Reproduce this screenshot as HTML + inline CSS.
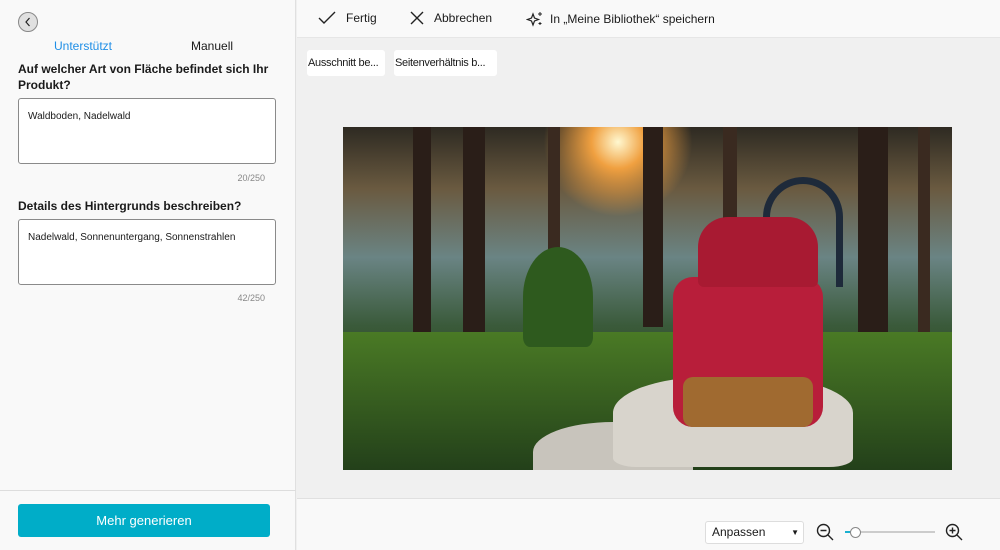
<!DOCTYPE html>
<html><head><meta charset="utf-8"><style>
*{box-sizing:border-box;margin:0;padding:0}
body{width:1000px;height:550px;overflow:hidden;font-family:"Segoe UI","Liberation Sans",sans-serif;background:#f0f0f0;position:relative;font-size:12px;color:#1a1a1a}
.abs{position:absolute}
.left{left:0;top:0;width:296px;height:550px;background:#f9f9f9;border-right:1px solid #e0e0e0}
.ta{position:absolute;left:18px;width:258px;height:66px;background:#fff;border:1px solid #8a8a8a;border-radius:3px;font-size:10px;padding:12px 9px}
.lbl{position:absolute;left:18px;font-weight:bold;font-size:12px;line-height:16px}
.cnt{position:absolute;right:30px;font-size:9px;color:#888}
.tool{position:absolute;top:11px;font-size:12px;display:flex;align-items:center;gap:10px}
.btn{position:absolute;top:50px;height:26px;background:#fff;border-radius:3px;font-size:11px;line-height:26px;padding:0 1px;white-space:nowrap;overflow:hidden;letter-spacing:-0.3px}
</style></head><body>
<div class="abs left">
  <div class="abs" style="left:18px;top:12px;width:20px;height:20px;border-radius:50%;background:#e0e0e0;border:1px solid #888"><svg width="18" height="18" style="position:absolute;left:0;top:0"><path d="M10.5 5L7 9l3.5 4" stroke="#222" fill="none" stroke-width="1.2"/></svg></div>
  <div class="abs" style="left:54px;top:39px;color:#1e8ee6;font-size:12px">Unterstützt</div>
  <div class="abs" style="left:191px;top:39px;font-size:12px">Manuell</div>
  <div class="lbl" style="top:61px">Auf welcher Art von Fläche befindet sich Ihr<br>Produkt?</div>
  <div class="ta" style="top:98px">Waldboden, Nadelwald</div>
  <div class="cnt" style="top:173px">20/250</div>
  <div class="lbl" style="top:198px">Details des Hintergrunds beschreiben?</div>
  <div class="ta" style="top:219px">Nadelwald, Sonnenuntergang, Sonnenstrahlen</div>
  <div class="cnt" style="top:293px">42/250</div>
  <div class="abs" style="left:0;top:490px;width:296px;border-top:1px solid #ddd"></div>
  <div class="abs" style="left:18px;top:504px;width:252px;height:33px;background:#00adc8;border-radius:3px;color:#fff;font-size:13px;text-align:center;line-height:33px">Mehr generieren</div>
</div>
<div class="abs" style="left:297px;top:0;width:703px;height:38px;background:#f9f9f9;border-bottom:1px solid #e6e6e6"></div>
<div class="tool" style="left:318px"><svg width="18" height="14"><path d="M1 7l5 5L17 1" stroke="#222" fill="none" stroke-width="1.4"/></svg>Fertig</div>
<div class="tool" style="left:410px"><svg width="14" height="14"><path d="M1 1l12 12M13 1L1 13" stroke="#222" stroke-width="1.4"/></svg>Abbrechen</div>
<div class="tool" style="left:526px;gap:6px"><svg width="18" height="16"><path d="M7 3l1.5 4 4 1.5-4 1.5L7 14l-1.5-4-4-1.5 4-1.5z" stroke="#222" fill="none" stroke-width="1.2"/><path d="M14 1v4M12 3h4M14 11v3M12.5 12.5h3" stroke="#222" stroke-width="1"/></svg>In „Meine Bibliothek“ speichern</div>
<div class="btn" style="left:307px;width:78px">Ausschnitt be...</div>
<div class="btn" style="left:394px;width:103px">Seitenverhältnis b...</div>
<div class="abs" style="left:343px;top:127px;width:609px;height:343px;overflow:hidden;background:linear-gradient(180deg,#2e2a22 0%,#6a5a40 18%,#6a8484 38%,#3a5a3a 58%,#2a4418 78%,#1a2a10 100%)">
  <div class="abs" style="left:200px;top:-60px;width:150px;height:150px;border-radius:50%;background:radial-gradient(circle,#fff8d0 0%,#f0a040 25%,rgba(200,120,40,0) 70%)"></div>
  <div class="abs" style="left:70px;top:0;width:18px;height:220px;background:#2a1e18"></div>
  <div class="abs" style="left:120px;top:0;width:22px;height:230px;background:#2a1e18"></div>
  <div class="abs" style="left:205px;top:0;width:12px;height:200px;background:#3a2a20"></div>
  <div class="abs" style="left:300px;top:0;width:20px;height:200px;background:#2a1e18"></div>
  <div class="abs" style="left:380px;top:0;width:14px;height:180px;background:#3a2a20"></div>
  <div class="abs" style="left:515px;top:0;width:30px;height:250px;background:#2a1e18"></div>
  <div class="abs" style="left:575px;top:0;width:12px;height:240px;background:#3a2a20"></div>
  <div class="abs" style="left:0;top:205px;width:609px;height:138px;background:linear-gradient(180deg,#4a7a25,#23401a)"></div>
  <div class="abs" style="left:180px;top:120px;width:70px;height:100px;border-radius:50% 50% 10% 10%;background:#2e5a1e"></div>
  <div class="abs" style="left:190px;top:295px;width:160px;height:60px;border-radius:50% 50% 0 0;background:#c8c4bc"></div>
  <div class="abs" style="left:270px;top:250px;width:240px;height:90px;border-radius:40% 40% 10% 10%;background:#d8d4cc"></div>
  <div class="abs" style="left:330px;top:150px;width:150px;height:150px;border-radius:20px;background:#b81e3a"></div>
  <div class="abs" style="left:340px;top:250px;width:130px;height:50px;border-radius:10px;background:#a06a30"></div>
  <div class="abs" style="left:420px;top:50px;width:80px;height:110px;border:7px solid #1e2a3a;border-radius:40px 40px 0 0;border-bottom:none"></div>
  <div class="abs" style="left:355px;top:90px;width:120px;height:70px;border-radius:30px 30px 6px 6px;background:#a81a32"></div>
</div>
<div class="abs" style="left:297px;top:498px;width:703px;height:52px;background:#f9f9f9;border-top:1px solid #e0e0e0"></div>
<div class="abs" style="left:705px;top:521px;width:99px;height:23px;background:#fff;border:1px solid #ddd;border-radius:3px;font-size:12px;line-height:21px;padding-left:6px">Anpassen<span style="position:absolute;right:4px;font-size:8px">&#9660;</span></div>
<svg class="abs" style="left:816px;top:523px" width="18" height="18"><circle cx="7.5" cy="7.5" r="6" stroke="#222" fill="none" stroke-width="1.4"/><path d="M4.5 7.5h6M12 12l5 5" stroke="#222" stroke-width="1.4"/></svg>
<div class="abs" style="left:845px;top:531px;width:90px;height:2px;background:#ccc"></div>
<div class="abs" style="left:845px;top:531px;width:8px;height:2px;background:#1ab0d0"></div>
<div class="abs" style="left:850px;top:527px;width:11px;height:11px;border-radius:50%;background:#fff;border:1px solid #888"></div>
<svg class="abs" style="left:945px;top:523px" width="18" height="18"><circle cx="7.5" cy="7.5" r="6" stroke="#222" fill="none" stroke-width="1.4"/><path d="M4.5 7.5h6M7.5 4.5v6M12 12l5 5" stroke="#222" stroke-width="1.4"/></svg>
</body></html>
